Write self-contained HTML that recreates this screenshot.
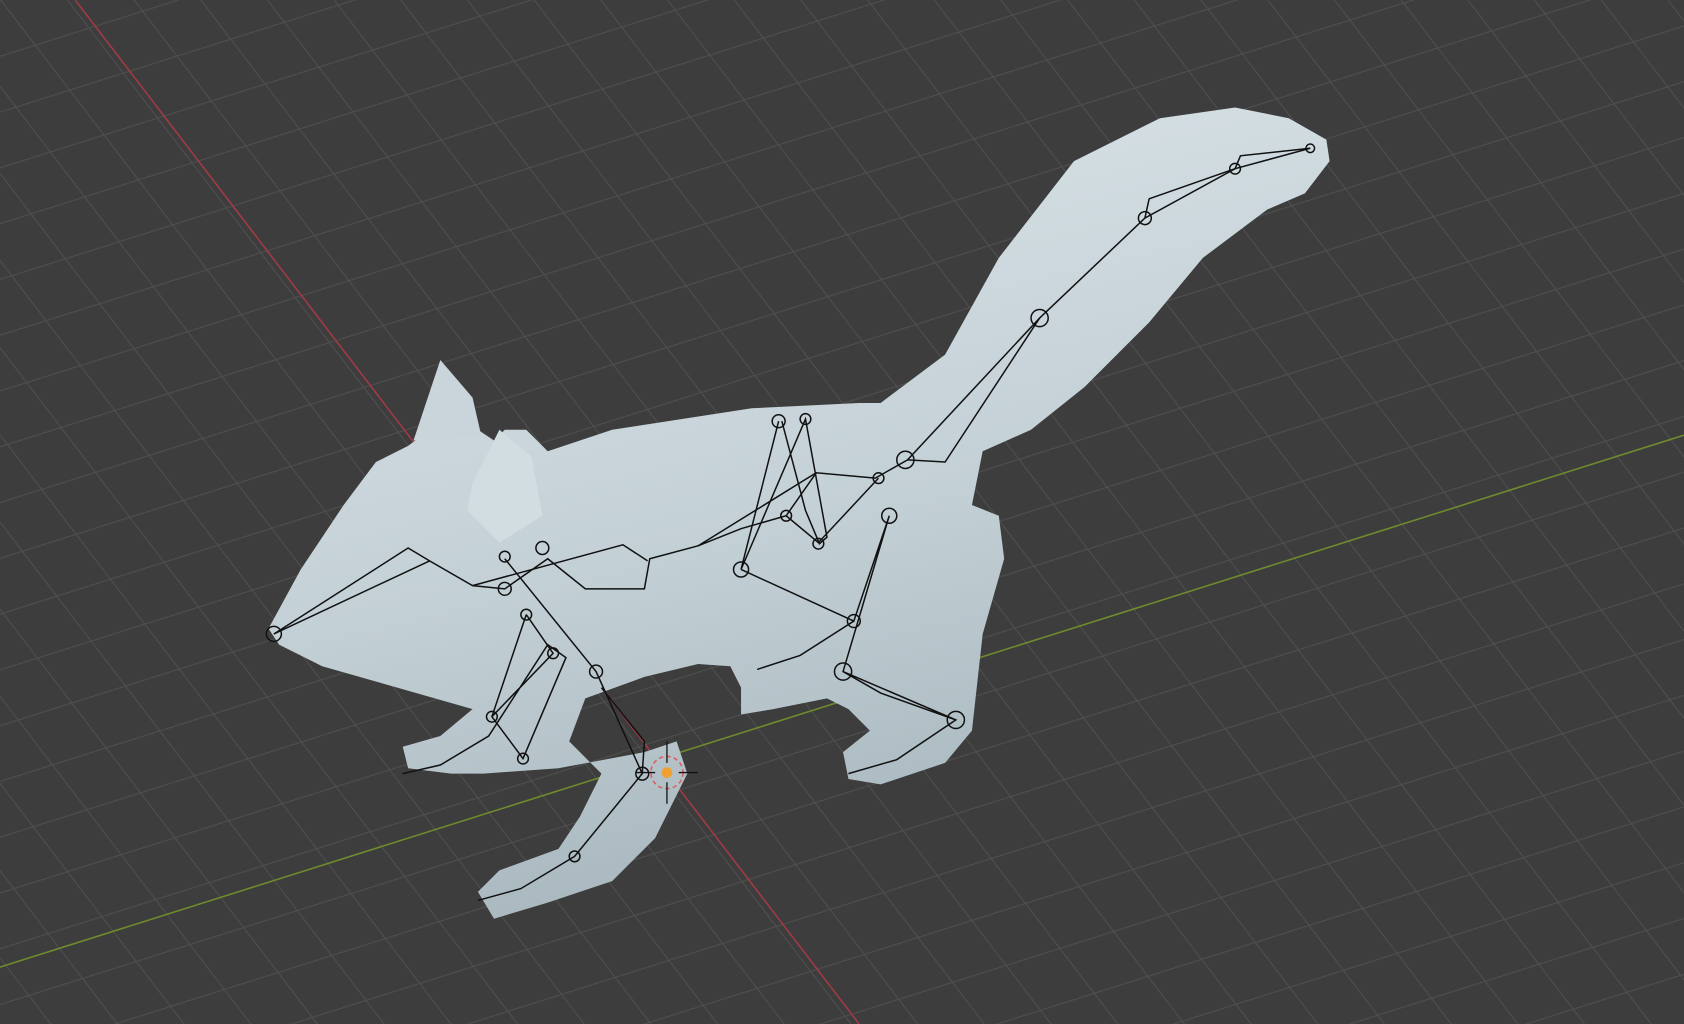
<!DOCTYPE html>
<html><head><meta charset="utf-8"><style>
html,body{margin:0;padding:0;background:#3d3d3d;overflow:hidden}
svg{display:block}
</style></head><body>
<svg width="1684" height="1024" viewBox="0 0 1568 953" preserveAspectRatio="none" xmlns="http://www.w3.org/2000/svg">
<defs>
<pattern id="g" width="1" height="1" patternUnits="userSpaceOnUse" patternTransform="matrix(50,-15.8,32,41.8,0,0)">
<rect width="1" height="1" fill="#3d3d3d"/>
<path d="M0 0H1M0 0V1" stroke="#4f4f4f" stroke-width="0.04" fill="none"/>
</pattern>
<linearGradient id="b" x1="0" y1="0" x2="0.3" y2="1">
<stop offset="0" stop-color="#dde6ea"/><stop offset="0.6" stop-color="#c3d0d6"/><stop offset="1" stop-color="#a9b8bf"/>
</linearGradient>
</defs>
<rect width="1568" height="953" fill="url(#g)"/>
<line x1="70" y1="0" x2="800" y2="953" stroke="#a03a44" stroke-width="1.5"/>
<line x1="0" y1="900" x2="1568" y2="405" stroke="#6f8a2d" stroke-width="1.5"/>
<path fill="url(#b)" d="M820 375 L880 330 930 240 1000 150 1080 110 1150 100 1200 110 1235 130 1238 150 1215 180 1180 195 1120 240 1070 300 1010 360 960 400 915 420 905 470 930 480 935 520 915 590 905 680 880 710 820 730 790 725 785 700 810 680 790 660 770 650 720 660 690 665 690 640 680 620 650 618 600 630 545 650 530 690 560 720 540 760 520 790 465 810 445 830 460 855 510 840 570 820 610 780 640 720 630 690 600 700 520 715 450 720 420 720 380 715 375 695 410 685 440 660 300 620 260 600 250 585 280 530 320 470 350 430 380 415 400 400 410 340 445 400 460 410 470 400 490 400 510 420 570 400 700 380 800 375Z"/>
<path fill="#c9d5db" d="M385 410 L410 335 440 370 448 405Z"/>
<path fill="#d2dde2" d="M440 450 L465 400 495 425 505 480 465 505 435 475Z"/>
<g stroke="#111" stroke-width="1.4" fill="none">
<path d="M255 590 L380 510 400 522 440 545 470 548 510 520 545 548 600 548 605 520 650 508 690 492 732 480 760 440 815 445 845 428 968 296 1066 203 1150 157 1220 138"/>
<path d="M255 590 L400 522 M440 545 L580 507 603 522 M650 508 L760 440 M845 428 L880 430 968 296 M1066 203 L1070 185 1150 157 1155 145 1220 138"/>
<path d="M725 392 L690 530 750 390 770 500 763 506 750 475 728 392 M818 445 L762 505 732 480"/>
<path d="M690 530 L795 578 828 480 785 625 890 670 835 707 790 720 M795 578 L745 610 705 623 M785 625 L820 645 890 670"/>
<path d="M470 520 L555 625 598 720 535 797 485 827 445 838 M598 720 L600 690 560 640"/>
<path d="M490 572 L515 608 458 667 487 706 527 612 510 600 455 685 410 712 375 720 M490 572 L458 667"/>
</g>
<g stroke="#111" stroke-width="1.4" fill="none">
<circle cx="255" cy="590" r="7"/><circle cx="968" cy="296" r="8"/><circle cx="1066" cy="203" r="6"/><circle cx="1150" cy="157" r="5"/><circle cx="1220" cy="138" r="4"/>
<circle cx="843" cy="428" r="8"/><circle cx="725" cy="392" r="6"/><circle cx="750" cy="390" r="5"/><circle cx="818" cy="445" r="5"/><circle cx="732" cy="480" r="5"/>
<circle cx="690" cy="530" r="7"/><circle cx="828" cy="480" r="7"/><circle cx="795" cy="578" r="6"/><circle cx="785" cy="625" r="8"/><circle cx="890" cy="670" r="8"/>
<circle cx="555" cy="625" r="6"/><circle cx="598" cy="720" r="6"/><circle cx="535" cy="797" r="5"/><circle cx="490" cy="572" r="5"/><circle cx="515" cy="608" r="5"/><circle cx="458" cy="667" r="5"/><circle cx="487" cy="706" r="5"/><circle cx="470" cy="548" r="6"/><circle cx="470" cy="518" r="5"/><circle cx="505" cy="510" r="6"/><circle cx="762" cy="506" r="5"/>
</g>
<circle cx="621" cy="719" r="15" fill="none" stroke="#e06060" stroke-dasharray="4 3" stroke-width="1.5"/>
<circle cx="621" cy="719" r="5" fill="#f0a030"/>
<path d="M621 690V710M621 728V748M592 719H610M632 719H650" stroke="#111" stroke-width="1.2"/>
</svg>
</body></html>
